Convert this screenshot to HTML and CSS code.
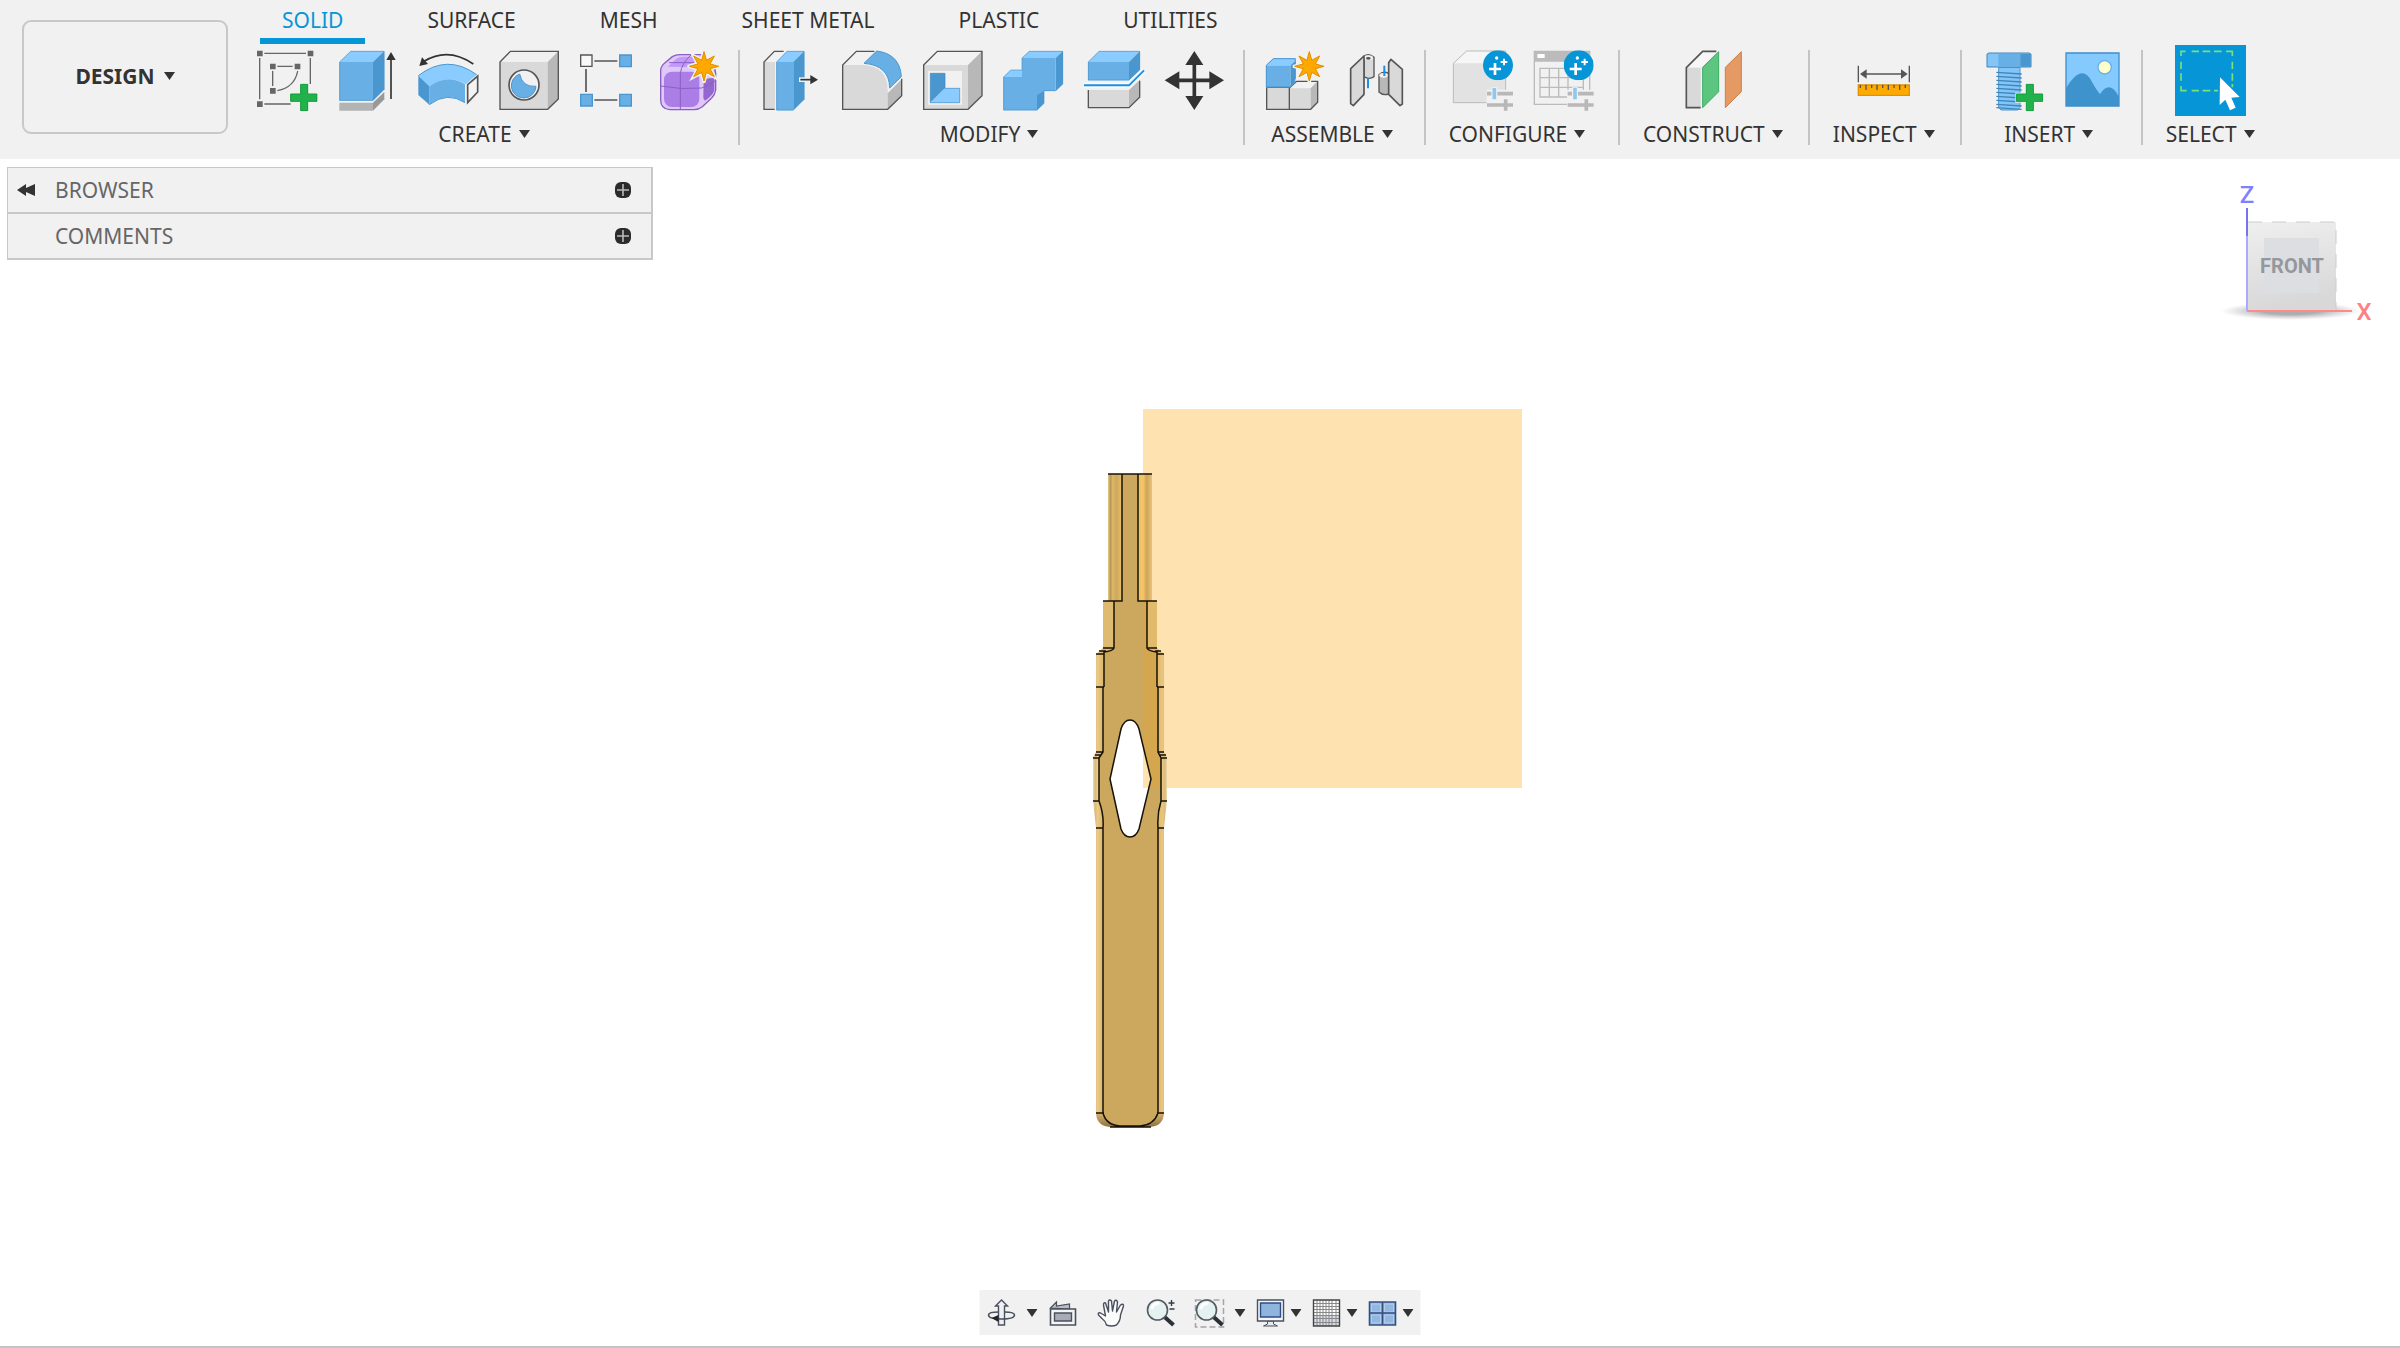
FILE: index.html
```
<!DOCTYPE html>
<html lang="en">
<head>
    <meta charset="UTF-8">
    <meta name="viewport" content="width=device-width, initial-scale=1.0">
    <title>Design Workspace</title>
    <link rel="stylesheet" href="styles.css">
</head>
<body>
    <!-- Shared icon parts -->
    <svg class="defs" aria-hidden="true">
        <symbol id="caret" viewBox="0 0 11 8"><path d="M0 0H11L5.5 8Z" fill="#333"/></symbol>
        <symbol id="star" viewBox="-50 -50 100 100">
            <path d="M0-46 8-19 32-32 19-8 46 0 19 8 32 32 8 19 0 46-8 19-32 32-19 8-46 0-19-8-32-32-8-19Z" fill="#ffa800" stroke="#f1f1f1" stroke-width="10" paint-order="stroke"/>
            <path d="M0-44 7-18 31-31 18-7 44 0 18 7 31 31 7 18 0 44-7 18-31 31-18 7-44 0-18-7-31-31-7-18Z" fill="none" stroke="#e09200" stroke-width="3"/>
        </symbol>
        <symbol id="plus" viewBox="0 0 84 84">
            <path d="M33 3H54V32H82V54H54V82H33V54H3V32H33Z" fill="#22b24c" stroke="#f1f1f1" stroke-width="8" paint-order="stroke"/>
            <path d="M33 3H54V32H82V54H54V82H33V54H3V32H33Z" fill="none" stroke="#129a3a" stroke-width="3"/>
        </symbol>
        <symbol id="sliders" viewBox="0 0 90 76">
            <path d="M0 9H82V70H0Z" fill="#f1f1f1"/>
            <path d="M2 21H80M2 55H80" stroke="#b8b8b8" stroke-width="11"/>
            <path d="M24 2V40" stroke="#f1f1f1" stroke-width="18"/>
            <path d="M24 4V38" stroke="#8fc8ef" stroke-width="11"/>
            <path d="M58 38V72" stroke="#b8b8b8" stroke-width="11"/>
        </symbol>
        <symbol id="sparkle" viewBox="0 0 90 90">
            <circle cx="45" cy="45" r="45" fill="#0696d7"/>
            <path d="M36 38V74M18 56H54" stroke="#fff" stroke-width="8"/>
            <path d="M63 25V45M53 35H73" stroke="#fff" stroke-width="6"/>
            <circle cx="41" cy="23" r="5" fill="#fff"/>
        </symbol>
    </svg>

    <header class="toolbar">
        <button class="workspace" type="button">DESIGN <svg class="caret"><use href="#caret"/></svg></button>

        <div class="toolbar-main">
            <nav class="tabs">
                <a class="tab active" href="#">SOLID</a>
                <a class="tab" href="#">SURFACE</a>
                <a class="tab" href="#">MESH</a>
                <a class="tab" href="#">SHEET METAL</a>
                <a class="tab" href="#">PLASTIC</a>
                <a class="tab" href="#">UTILITIES</a>
            </nav>

            <div class="ribbon">
                <!-- Create -->
                <section class="group group-first">
                    <div class="tools">
                        <button class="tool" type="button" aria-label="Create Sketch">
                            <svg viewBox="0 0 183 183">
                                <path d="M25 10H150M11 24V148M163 24V102M25 162H104M64 49H110M50 63V108M125 63Q116 112 64 122" fill="none" stroke="#666" stroke-width="4"/>
                                <path d="M3 2h17v17H3ZM155 2h17v17h-17ZM3 154h17v17H3ZM42 41h17v17H42ZM116 41h17v17h-17ZM42 114h17v17H42Z" fill="#666"/>
                                <use href="#plus" x="101" y="100" width="84" height="84"/>
                            </svg>
                        </button>
                        <button class="tool" type="button" aria-label="Extrude">
                            <svg viewBox="0 0 183 183">
                                <path d="M7 158H108V182H7Z" fill="#b3b3b3"/>
                                <path d="M108 158 142 126V148L108 182Z" fill="#999"/>
                                <path d="M7 36H108V152H7Z" fill="#68afe5"/>
                                <path d="M7 36 41 3H142L108 36Z" fill="#8accff"/>
                                <path d="M108 36 142 3V118L108 152Z" fill="#4a96cf"/>
                                <path d="M8 36 41 4H141V118L108 151H8Z" fill="none" stroke="#4a96cf" stroke-width="2"/>
                                <path d="M162 22V147" stroke="#333" stroke-width="5"/>
                                <path d="M148 30 162 6 176 30Z" fill="#333"/>
                            </svg>
                        </button>
                        <button class="tool" type="button" aria-label="Revolve">
                            <svg viewBox="0 0 183 183">
                                <path d="M18 34Q90-10 166 42" fill="none" stroke="#333" stroke-width="5"/>
                                <path d="M4 48 12 22 30 42Z" fill="#333"/>
                                <path d="M1 77Q88 10 176 74L143 103Q88 70 34 109Z" fill="#8accff"/>
                                <path d="M34 109Q88 70 141 103V158Q88 123 34 164Z" fill="#68afe5"/>
                                <path d="M1 77 34 109V164L1 135Z" fill="#4a96cf"/>
                                <path d="M1 77Q88 10 176 74M34 164Q88 123 141 158" fill="none" stroke="#4a96cf" stroke-width="3"/>
                                <path d="M149 104 179 78V126L149 158Z" fill="#f4f4f4" stroke="#555" stroke-width="5"/>
                            </svg>
                        </button>
                        <button class="tool" type="button" aria-label="Hole">
                            <svg viewBox="0 0 183 183">
                                <path d="M2 36 34 4H178L146 36Z" fill="#f0f0f0"/>
                                <path d="M2 36H146V179H2Z" fill="#d9d9d9"/>
                                <path d="M146 36 178 4V147L146 179Z" fill="#b8b8b8"/>
                                <path d="M3 36 34 4H178V147L146 178H3Z" fill="none" stroke="#555" stroke-width="4"/>
                                <circle cx="75" cy="105" r="45" fill="#f1f1f1" stroke="#555" stroke-width="5"/>
                                <path d="M62 72Q70 112 111 109A37 37 0 1 1 62 72Z" fill="#68afe5" stroke="#4a96cf" stroke-width="3"/>
                            </svg>
                        </button>
                        <button class="tool" type="button" aria-label="Rectangular Pattern">
                            <svg viewBox="0 0 183 183">
                                <path d="M43 33H112M18 57V126M43 150H112" stroke="#555" stroke-width="5"/>
                                <path d="M2 15h34v34H2Z" fill="#f8f8f8" stroke="#555" stroke-width="4"/>
                                <path d="M119 15h35v35h-35ZM2 133h35v35H2ZM119 133h35v35h-35Z" fill="#68afe5" stroke="#4a96cf" stroke-width="4"/>
                            </svg>
                        </button>
                        <button class="tool" type="button" aria-label="Create Form">
                            <svg viewBox="0 0 183 183">
                                <path d="M-1 60Q0 48 12 38L34 20Q44 14 56 14H120Q160 30 164 70V120Q162 134 152 144L124 170Q112 179 100 179H26Q-1 177-1 150Z" fill="#dfc8f8" stroke="#8a5fc0" stroke-width="4"/>
                                <path d="M20 50 46 26Q54 20 66 20H112L90 52Z" fill="#c299fb"/>
                                <path d="M128 92Q130 84 160 84V120Q156 136 132 152Q127 150 127 140Z" fill="#9466cf"/>
                                <rect x="9" y="65" width="106" height="106" rx="24" fill="#aa7ee6"/>
                                <path d="M0 108Q60 120 122 114Q140 108 163 92M58 179V70Q62 40 90 15M24 38H100" fill="none" stroke="#8a5fc0" stroke-width="3"/>
                                <use href="#star" x="79" y="-1" width="100" height="100"/>
                            </svg>
                        </button>
                    </div>
                    <button class="group-label" type="button">CREATE <svg class="caret"><use href="#caret"/></svg></button>
                </section>

                <!-- Modify -->
                <section class="group">
                    <div class="tools">
                        <button class="tool" type="button" aria-label="Press Pull">
                            <svg viewBox="0 0 183 183">
                                <path d="M8 36H42V179H8Z" fill="#d9d9d9"/>
                                <path d="M68 4H40L9 36V178H41" fill="none" stroke="#555" stroke-width="4"/>
                                <path d="M46 36H97V181H46Z" fill="#68afe5"/>
                                <path d="M46 36 78 3H130L97 36Z" fill="#8accff"/>
                                <path d="M97 36 130 3V148L97 181Z" fill="#4a96cf"/>
                                <path d="M47 36 78 4H129V148L97 180H47Z" fill="none" stroke="#4a96cf" stroke-width="2"/>
                                <path d="M114 89H150" stroke="#f1f1f1" stroke-width="14"/>
                                <path d="M118 89H150" stroke="#333" stroke-width="5"/>
                                <path d="M148 75 171 89 148 103Z" fill="#333"/>
                            </svg>
                        </button>
                        <button class="tool" type="button" aria-label="Fillet">
                            <svg viewBox="0 0 183 183">
                                <path d="M2 45H62Q137 48 137 120V179H2Z" fill="#d9d9d9"/>
                                <path d="M137 130 179 88V137L137 179Z" fill="#b8b8b8"/>
                                <path d="M97 4H43L2 45V178H137L179 137V86" fill="none" stroke="#555" stroke-width="4"/>
                                <path d="M66 40 104 3Q174 12 178 80L143 114Q142 46 66 40Z" fill="#68afe5" stroke="#4a96cf" stroke-width="3"/>
                            </svg>
                        </button>
                        <button class="tool" type="button" aria-label="Shell">
                            <svg viewBox="0 0 183 183">
                                <path d="M2 45 43 4H177L135 45Z" fill="#f2f2f2"/>
                                <path d="M2 45H135V179H2Z" fill="#d9d9d9"/>
                                <path d="M135 45 177 4V137L135 179Z" fill="#b8b8b8"/>
                                <path d="M2 45 43 4H177V137L135 178H2Z" fill="none" stroke="#555" stroke-width="4"/>
                                <path d="M15 63H117V164H15Z" fill="#f1f1f1"/>
                                <path d="M22 70H66V115L22 158Z" fill="#4a96cf"/>
                                <path d="M22 158 66 115H110V158Z" fill="#8accff"/>
                                <path d="M22 158V70H66V115H110V158Z" fill="none" stroke="#3f86bd" stroke-width="2"/>
                            </svg>
                        </button>
                        <button class="tool" type="button" aria-label="Combine">
                            <svg viewBox="0 0 183 183">
                                <path d="M-2 81 20 60H60V81ZM54 24 76 3H177L155 24Z" fill="#8accff"/>
                                <path d="M155 24 177 3V102L155 123ZM99 123H120V160L99 181Z" fill="#4a96cf"/>
                                <path d="M-2 81H54V24H155V123H120L99 136V181H-2Z" fill="#68afe5"/>
                                <path d="M-1 81 20 60H54V24L76 4H176V102L155 122H120V160L99 180H-1Z" fill="none" stroke="#4a96cf" stroke-width="2"/>
                            </svg>
                        </button>
                        <button class="tool" type="button" aria-label="Split Body">
                            <svg viewBox="0 0 183 183">
                                <path d="M10 120H132V173H10Z" fill="#d9d9d9"/>
                                <path d="M132 120 164 90V142L132 173Z" fill="#b8b8b8"/>
                                <path d="M10 120V173H132L164 142V92" fill="none" stroke="#555" stroke-width="4"/>
                                <path d="M9 36H132V91H9Z" fill="#68afe5"/>
                                <path d="M9 36 42 3H165L132 36Z" fill="#8accff"/>
                                <path d="M132 36 165 3V60L132 91Z" fill="#4a96cf"/>
                                <path d="M10 36 42 4H164V60L132 90H10Z" fill="none" stroke="#4a96cf" stroke-width="2"/>
                                <path d="M-3 106H132L177 61" fill="none" stroke="#f8f8f8" stroke-width="18"/>
                                <path d="M-3 106H132L177 61" fill="none" stroke="#1a90e8" stroke-width="6"/>
                            </svg>
                        </button>
                        <button class="tool" type="button" aria-label="Move/Copy">
                            <svg viewBox="0 0 183 183">
                                <path d="M85 30V150M24 91H146" stroke="#333" stroke-width="11"/>
                                <path d="M85 3 112 45H58ZM85 180 58 138H112ZM-4 91 40 64V118ZM174 91 130 118V64Z" fill="#333"/>
                            </svg>
                        </button>
                    </div>
                    <button class="group-label" type="button">MODIFY <svg class="caret"><use href="#caret"/></svg></button>
                </section>

                <!-- Assemble -->
                <section class="group">
                    <div class="tools">
                        <button class="tool" type="button" aria-label="New Component">
                            <svg viewBox="0 0 183 183">
                                <path d="M2 112H134V179H2Z" fill="#d9d9d9"/>
                                <path d="M70 115 92 93H155L134 115Z" fill="#f2f2f2"/>
                                <path d="M134 115 155 93V157L134 179Z" fill="#b8b8b8"/>
                                <path d="M2 112V178H134L155 157V94H92L70 114V178M2 112H72" fill="none" stroke="#555" stroke-width="4"/>
                                <path d="M0 46H74V112H0Z" fill="#68afe5"/>
                                <path d="M0 46 22 25H88V32L74 46Z" fill="#8accff"/>
                                <path d="M74 46 88 32V96L74 112Z" fill="#4a96cf"/>
                                <path d="M1 46 22 26H88V97L74 111H1Z" fill="none" stroke="#4a96cf" stroke-width="3"/>
                                <use href="#star" x="80" y="-1" width="100" height="100"/>
                            </svg>
                        </button>
                        <button class="tool" type="button" aria-label="Joint">
                            <svg viewBox="0 0 183 183">
                                <path d="M51 24V80Q66 90 81 80V22Q66 8 51 18" fill="#d9d9d9" stroke="#555" stroke-width="4"/>
                                <ellipse cx="64" cy="23" rx="14" ry="7" fill="#f1f1f1"/>
                                <ellipse cx="64" cy="25" rx="7" ry="4" fill="#555"/>
                                <path d="M11 56 51 18V133L19 167 11 161Z" fill="#d9d9d9" stroke="#555" stroke-width="5" stroke-linejoin="round"/>
                                <path d="M63 85V115" stroke="#1a90e8" stroke-width="6"/>
                                <path d="M96 74V126Q108 138 125 132V70Q108 62 96 74Z" fill="#b8b8b8" stroke="#555" stroke-width="4"/>
                                <ellipse cx="110" cy="76" rx="13" ry="7" fill="#f1f1f1"/>
                                <path d="M112 47V78" stroke="#1a90e8" stroke-width="6"/>
                                <path d="M125 38 132 28 166 58V162L159 167 125 133Z" fill="#d9d9d9" stroke="#555" stroke-width="5" stroke-linejoin="round"/>
                            </svg>
                        </button>
                    </div>
                    <button class="group-label" type="button">ASSEMBLE <svg class="caret"><use href="#caret"/></svg></button>
                </section>

                <!-- Configure -->
                <section class="group group-wide">
                    <div class="tools">
                        <button class="tool" type="button" aria-label="Configure Design">
                            <svg viewBox="0 0 183 183">
                                <path d="M7 40 47 3H164V130L140 158H7Z" fill="#e2e2e2"/>
                                <path d="M7 40 47 3H164L130 40Z" fill="#f6f6f6"/>
                                <path d="M110 158H7V40L47 3H164V120" fill="none" stroke="#bbb" stroke-width="3"/>
                                <use href="#sliders" x="106" y="110" width="90" height="76"/>
                                <use href="#sparkle" x="96" y="1" width="90" height="90"/>
                            </svg>
                        </button>
                        <button class="tool" type="button" aria-label="Configuration Table">
                            <svg viewBox="0 0 183 183">
                                <path d="M7 4H173V163H7Z" fill="#f1f1f1" stroke="#bbb" stroke-width="4"/>
                                <path d="M7 3H173V35H7Z" fill="#bbb"/>
                                <path d="M16 12h22v12H16Z" fill="#fff"/>
                                <path d="M24 55H154V141H24ZM24 83H154M24 112H154M52 55V141M80 55V141M108 55V141M154 55V120" fill="none" stroke="#bbb" stroke-width="4"/>
                                <use href="#sliders" x="105" y="110" width="90" height="76"/>
                                <use href="#sparkle" x="95" y="1" width="90" height="90"/>
                            </svg>
                        </button>
                    </div>
                    <button class="group-label" type="button">CONFIGURE <svg class="caret"><use href="#caret"/></svg></button>
                </section>

                <!-- Construct -->
                <section class="group group-label-sized">
                    <div class="tools">
                        <button class="tool" type="button" aria-label="Offset Plane">
                            <svg viewBox="0 0 183 183">
                                <path d="M12 53 62 4H103L56 53Z" fill="#f6f6f6"/>
                                <path d="M12 53H56V174H12Z" fill="#d9d9d9"/>
                                <path d="M103 4H62L13 53V173H56" fill="none" stroke="#555" stroke-width="5"/>
                                <path d="M62 52 110 5V125L62 173Z" fill="#5cc681" stroke="#38b064" stroke-width="3"/>
                                <path d="M130 52 178 5V125L130 173Z" fill="#e59a64" stroke="#c9804c" stroke-width="3"/>
                            </svg>
                        </button>
                    </div>
                    <button class="group-label" type="button">CONSTRUCT <svg class="caret"><use href="#caret"/></svg></button>
                </section>

                <!-- Inspect -->
                <section class="group group-label-sized">
                    <div class="tools">
                        <button class="tool" type="button" aria-label="Measure">
                            <svg viewBox="0 0 183 183">
                                <path d="M16 47V97M169 47V97M36 72H150" stroke="#555" stroke-width="4"/>
                                <path d="M21 72 41 58V86ZM164 72 144 86V58Z" fill="#555"/>
                                <path d="M16 105H169V136H16Z" fill="#ffaa00" stroke="#e09200" stroke-width="4"/>
                                <path d="M22 104v10M39 104v16M56 104v10M72 104v16M89 104v10M106 104v16M123 104v10M140 104v16M157 104v10" stroke="#555" stroke-width="4"/>
                            </svg>
                        </button>
                    </div>
                    <button class="group-label" type="button">INSPECT <svg class="caret"><use href="#caret"/></svg></button>
                </section>

                <!-- Insert -->
                <section class="group">
                    <div class="tools">
                        <button class="tool" type="button" aria-label="Insert Fastener">
                            <svg viewBox="0 0 183 183">
                                <path d="M47 52H111V172L104 180H54L47 172Z" fill="#84c5f7" stroke="#4a96cf" stroke-width="3"/>
                                <path d="M12 12 18 9H138L144 12V51H12Z" fill="#84c5f7" stroke="#3f86bd" stroke-width="3"/>
                                <path d="M46 12H112V51H46Z" fill="#68afe5"/>
                                <path d="M112 12H143V50H112Z" fill="#4a96cf"/>
                                <path d="M40 67 116 72M40 79 116 84M40 91 116 96M40 103 116 108M40 115 116 120M40 127 116 132M40 139 116 144M40 151 116 156M40 163 116 168M40 173 116 178" stroke="#3f86bd" stroke-width="4"/>
                                <use href="#plus" x="97" y="100" width="84" height="84"/>
                            </svg>
                        </button>
                        <button class="tool" type="button" aria-label="Canvas">
                            <svg viewBox="0 0 183 183">
                                <path d="M6 9H165V168H6Z" fill="#84caff"/>
                                <path d="M6 115Q54 36 84 96Q96 118 108 133Q136 88 165 140V168H6Z" fill="#3e93cd"/>
                                <circle cx="122" cy="52" r="20" fill="#ffffcc" stroke="#68afe5" stroke-width="4"/>
                                <path d="M6 9H165V168H6Z" fill="none" stroke="#3e8fcb" stroke-width="4"/>
                            </svg>
                        </button>
                    </div>
                    <button class="group-label" type="button">INSERT <svg class="caret"><use href="#caret"/></svg></button>
                </section>

                <!-- Select -->
                <section class="group group-label-sized group-last">
                    <div class="tools">
                        <button class="tool selected" type="button" aria-label="Window Selection">
                            <svg viewBox="0 0 183 183">
                                <path d="M3 18V4H17M35 4H57M68 4H91M102 4H125M138 4H157V18M157 35V57M157 70V92M3 35V57M3 70V92M3 108V122H20M35 122H57M68 122H91M102 122H114M157 102V112" fill="none" stroke="#78e07c" stroke-width="5"/>
                                <path d="M120 82 179 141 154 143 167 173 150 181 136 149 119 165Z" fill="#fff"/>
                            </svg>
                        </button>
                    </div>
                    <button class="group-label" type="button">SELECT <svg class="caret"><use href="#caret"/></svg></button>
                </section>
            </div>
        </div>
    </header>

    <main class="viewport">
        <!-- Side panels -->
        <aside class="panels">
            <div class="panel">
                <button class="collapse" type="button" aria-label="Collapse">
                    <svg width="18" height="12" viewBox="0 0 18 12"><path d="M0 6 9 0V4L18 0V12L9 8V12Z" fill="#333"/></svg>
                </button>
                <span class="panel-title">BROWSER</span>
                <button class="expand" type="button" aria-label="Browser options">
                    <svg width="16" height="16" viewBox="0 0 16 16"><rect width="16" height="16" rx="6" fill="#2b2b2b"/><path d="M8 2V14M2 8H14" stroke="#bbb" stroke-width="1.6"/></svg>
                </button>
            </div>
            <div class="panel">
                <span class="panel-title">COMMENTS</span>
                <button class="expand" type="button" aria-label="Add comment">
                    <svg width="16" height="16" viewBox="0 0 16 16"><rect width="16" height="16" rx="6" fill="#2b2b2b"/><path d="M8 2V14M2 8H14" stroke="#bbb" stroke-width="1.6"/></svg>
                </button>
            </div>
        </aside>

        <!-- Model and construction plane -->
        <svg class="scene" width="440" height="730" viewBox="0 0 440 730" role="img" aria-label="Model, front view">
            <defs>
                <linearGradient id="shaft" x1="0" x2="1" y1="0" y2="0">
                    <stop offset="0" stop-color="#e6c98b"/>
                    <stop offset="0.06" stop-color="#b8964f"/>
                    <stop offset="0.1" stop-color="#dcb768"/>
                    <stop offset="0.2" stop-color="#cda75b"/>
                    <stop offset="0.3" stop-color="#e5bd69"/>
                    <stop offset="0.68" stop-color="#efc068"/>
                    <stop offset="0.8" stop-color="#f6c566"/>
                    <stop offset="0.88" stop-color="#cda458"/>
                    <stop offset="1" stop-color="#eac27a"/>
                </linearGradient>
                <linearGradient id="side" x1="0" x2="1" y1="0" y2="0">
                    <stop offset="0" stop-color="#ecd8ac"/>
                    <stop offset="0.03" stop-color="#d8bb7c"/>
                    <stop offset="0.06" stop-color="#ecca85"/>
                    <stop offset="0.12" stop-color="#deba72"/>
                    <stop offset="0.88" stop-color="#e2ba6c"/>
                    <stop offset="0.94" stop-color="#e8c680"/>
                    <stop offset="0.97" stop-color="#d8bb7c"/>
                    <stop offset="1" stop-color="#ecd8ac"/>
                </linearGradient>
                <linearGradient id="foot" x1="0" x2="0" y1="0" y2="1">
                    <stop offset="0" stop-color="#dcb873"/>
                    <stop offset="1" stop-color="#8f733e"/>
                </linearGradient>
            </defs>
            <path d="M53 0H432V379H53Z" fill="#fee2b0"/>
            <path d="M18 65H62V192H18Z" fill="url(#shaft)"/>
            <path d="M13 192H67V239L74 245V343L77 348V392L74 419V703H6V419L3 392V348L6 343V245L13 239Z M20 370 31 420Q34 428 40 428 46 428 49 420L61 370 49 320Q46 311 40 311 34 311 31 320Z" fill="url(#side)" fill-rule="evenodd"/>
            <path d="M6 703H74Q74 718 58 718H22Q6 718 6 703Z" fill="url(#foot)"/>
            <path d="M32 65H48V192H57V239Q58 243 67 243V278L68 343 71 349V392Q67 405 68 419V704Q64 717 50 717H30Q16 717 13 704V419Q14 405 9 392V349L13 343 14 243Q23 243 24 239V192H32Z M20 370 31 420Q34 428 40 428 46 428 49 420L61 370 49 320Q46 311 40 311 34 311 31 320Z" fill="#cca85e" fill-rule="evenodd"/>
            <path d="M53 192H57V239L67 243V278L68 343 71 349V379H59L61 370 53 336Z" fill="#ff9d00" opacity="0.16"/>
            <path d="M18 65H62M32 65V192H13M48 65V192H67M24 192V239Q23 242 14 243V278M57 192V239Q58 242 67 243V278M13 239H24M57 239H67M9 242H16M65 242H71M6 245H14M67 245H74M6 278H14M67 278H74M13 278V343L9 349V392Q14 405 13 419V704Q16 716 30 717H50Q64 716 68 704V419Q67 405 71 392V349L68 343V278M6 343H13M68 343H74M5 346H11M70 346H76M3 349H9M71 349H77M3 392H9M71 392H77M6 419H13M68 419H74M6 704H14M67 704H74M20 718H61" fill="none" stroke="#16120a" stroke-width="1.5"/>
            <path d="M20 370 31 420Q34 428 40 428 46 428 49 420L61 370 49 320Q46 311 40 311 34 311 31 320Z" fill="none" stroke="#16120a" stroke-width="1.5"/>
        </svg>

        <!-- View cube -->
        <svg class="viewcube" width="160" height="150" viewBox="0 0 160 150" role="img" aria-label="View cube">
            <defs>
                <linearGradient id="cubeFace" x1="0" x2="0.2" y1="0" y2="1">
                    <stop offset="0" stop-color="#efefef"/>
                    <stop offset="1" stop-color="#d8d8d8"/>
                </linearGradient>
                <radialGradient id="cubeShadow">
                    <stop offset="0.4" stop-color="#777" stop-opacity="0.6"/>
                    <stop offset="1" stop-color="#999" stop-opacity="0"/>
                </radialGradient>
            </defs>
            <ellipse cx="71" cy="131" rx="70" ry="9" fill="url(#cubeShadow)"/>
            <path d="M28 42H116V130H28Z" fill="url(#cubeFace)"/>
            <path d="M28 42H116V130" fill="none" stroke="#ccc" stroke-dasharray="14 10"/>
            <path d="M44 58H99V113H44Z" fill="#dcdee1"/>
            <path d="M27 28V131" stroke="#a9a9ff" stroke-width="2"/>
            <path d="M27 28V56" stroke="#7474ee" stroke-width="2"/>
            <path d="M27 131H132" stroke="#ff8a8a" stroke-width="2"/>
            <text class="axis" x="27" y="23" fill="#8080ff">Z</text>
            <text class="axis" x="144" y="140" fill="#ff8080">X</text>
            <text class="face" x="72" y="93" fill="#94989d">FRONT</text>
        </svg>

        <!-- Navigation bar -->
        <nav class="navbar">
            <button class="nav-button" type="button" aria-label="Orbit">
                <svg width="30" height="30" viewBox="0 0 30 30">
                    <path d="M12 27V8H9L15 2 21 8H18V27Z" fill="#eef0f4" stroke="#4a505c" stroke-width="1.4"/>
                    <path d="M12 14Q2 14 2 17 2 21 15 21 28 21 28 17 28 14 18 14" fill="none" stroke="#4a505c" stroke-width="1.6"/>
                    <path d="M5 20 12 17V24Z" fill="#222"/>
                </svg>
            </button>
            <button class="nav-caret" type="button" aria-label="Orbit options"><svg class="caret"><use href="#caret"/></svg></button>
            <button class="nav-button spaced" type="button" aria-label="Look At">
                <svg width="30" height="30" viewBox="0 0 30 30">
                    <path d="M3 10 9 4V8L22 6V11Z" fill="#b9bdc6" stroke="#4a505c" stroke-width="1.2"/>
                    <path d="M3 11H28V27H3Z" fill="#f4f5f7" stroke="#4a505c" stroke-width="1.6"/>
                    <path d="M7 15H24V23H7Z" fill="#a7acb5" stroke="#4a505c" stroke-width="1.4"/>
                </svg>
            </button>
            <button class="nav-button spaced" type="button" aria-label="Pan">
                <svg width="30" height="30" viewBox="0 0 30 30">
                    <path d="M10 27Q9 23 6 21L2 17Q1 14 4 15L9 18 7 7Q7 4 9 5L12 14V3Q13 1 15 3L16 13 18 3Q20 1 21 4L20 14 24 7Q27 5 27 8L24 17Q24 23 20 27Q15 29 10 27Z" fill="#fbfbfb" stroke="#4a505c" stroke-width="1.4" stroke-linejoin="round"/>
                </svg>
            </button>
            <button class="nav-button spaced" type="button" aria-label="Zoom">
                <svg width="30" height="30" viewBox="0 0 30 30">
                    <path d="M18 18 28 27" stroke="#2c303a" stroke-width="4"/>
                    <circle cx="12" cy="12" r="10" fill="#e4f1f1" stroke="#555b62" stroke-width="1.6"/>
                    <path d="M6 11Q8 5 14 5" fill="none" stroke="#fff" stroke-width="3"/>
                    <path d="M26 2V8M23 5H29M24 11H29" stroke="#333a4a" stroke-width="1.4"/>
                </svg>
            </button>
            <button class="nav-button" type="button" aria-label="Zoom Window">
                <svg width="30" height="30" viewBox="0 0 30 30">
                    <path d="M1 2H29V29H1Z" fill="none" stroke="#a5a5a5" stroke-width="1.5" stroke-dasharray="6 3"/>
                    <path d="M18 18 28 27" stroke="#2c2f33" stroke-width="4"/>
                    <circle cx="12" cy="12" r="10" fill="#e4f1f1" stroke="#555b62" stroke-width="1.6"/>
                    <path d="M6 11Q8 5 14 5" fill="none" stroke="#fff" stroke-width="3"/>
                </svg>
            </button>
            <button class="nav-caret" type="button" aria-label="Zoom options"><svg class="caret"><use href="#caret"/></svg></button>
            <button class="nav-button paired" type="button" aria-label="Display Settings">
                <svg width="30" height="30" viewBox="0 0 30 30">
                    <path d="M12 23H18V26L22 28H8L12 26Z" fill="#e8eaee" stroke="#4a505c"/>
                    <path d="M2 2H28V23H2Z" fill="#f7f7f9" stroke="#4a505c" stroke-width="1.4"/>
                    <path d="M5 5H25V19H5Z" fill="#8fb4de" stroke="#2f4e85" stroke-width="1.4"/>
                </svg>
            </button>
            <button class="nav-caret" type="button" aria-label="Display options"><svg class="caret"><use href="#caret"/></svg></button>
            <button class="nav-button paired" type="button" aria-label="Grid and Snaps">
                <svg width="30" height="30" viewBox="0 0 30 30">
                    <path d="M2 2H28V28H2Z" fill="#fff"/>
                    <path d="M2 18H28V28H2Z" fill="#d8dbea"/>
                    <path d="M5.5 2V28M8.5 2V28M11.5 2V28M14.5 2V28M17.5 2V28M20.5 2V28M24.5 2V28M2 5.5H28M2 8.5H28M2 11.5H28M2 14.5H28M2 17.5H28M2 20.5H28M2 24.5H28" stroke="#888" stroke-width="1"/>
                    <path d="M2 2H28V28H2Z" fill="none" stroke="#444" stroke-width="1.4"/>
                </svg>
            </button>
            <button class="nav-caret" type="button" aria-label="Grid options"><svg class="caret"><use href="#caret"/></svg></button>
            <button class="nav-button paired" type="button" aria-label="Viewports">
                <svg width="30" height="30" viewBox="0 0 30 30">
                    <path d="M2 4H28V27H2Z" fill="#8fb4de"/>
                    <path d="M4 6H13V14H4ZM17 6H26V14H17ZM4 17H13V25H4ZM17 17H26V25H17Z" fill="#92b8e2" stroke="#b4cdea"/>
                    <path d="M2 4H28V27H2ZM15 4V27M2 15H28" fill="none" stroke="#34507f" stroke-width="1.6"/>
                </svg>
            </button>
            <button class="nav-caret" type="button" aria-label="Viewport options"><svg class="caret"><use href="#caret"/></svg></button>
        </nav>
    </main>
</body>
</html>
```
FILE: styles.css
```
/* General Reset */
* {
    margin: 0;
    padding: 0;
    box-sizing: border-box;
}

body {
    font-family: 'Noto Sans', 'Open Sans', sans-serif;
    font-size: 21px;
    line-height: 28px;
    color: #333;
    background: #fff;
    display: flex;
    flex-direction: column;
    min-height: 100vh;
}

button {
    font: inherit;
    color: inherit;
    background: none;
    border: none;
    cursor: pointer;
}

a {
    color: inherit;
    text-decoration: none;
}

svg {
    display: block;
    overflow: visible;
}

.defs {
    position: absolute;
    width: 0;
    height: 0;
}

.caret {
    width: 11px;
    height: 8px;
}

/* Toolbar */
.toolbar {
    display: flex;
    gap: 23px;
    padding: 0 22px 11px;
    background: #f1f1f1;
}

.workspace {
    display: flex;
    align-items: center;
    justify-content: center;
    gap: 9px;
    width: 206px;
    height: 114px;
    margin-top: 20px;
    padding-bottom: 2px;
    border: 2px solid #c8c8c8;
    border-radius: 9px;
    font-weight: bold;
}

.tabs {
    display: flex;
    gap: 40px;
    padding-left: 9px;
}

.tab {
    padding: 6px 22px 4px;
    border-bottom: 6px solid transparent;
}

.tab.active {
    color: #0696d7;
    border-color: #0696d7;
}

/* Ribbon */
.ribbon {
    display: flex;
    margin-top: 1px;
}

.group {
    position: relative;
    display: flex;
    flex-direction: column;
    align-items: center;
    padding: 0 11px 0 18px;
}

.group::after {
    content: '';
    position: absolute;
    top: 5px;
    right: -2px;
    bottom: 3px;
    width: 2px;
    background: #c4c4c4;
}

.group-first {
    padding-left: 0;
}

.group-last::after {
    display: none;
}

.group-wide {
    padding: 0 20px 0 22px;
}

.group-label-sized {
    padding: 0 25px;
}

.tools {
    display: flex;
    gap: 10px;
}

.tool {
    width: 71px;
    height: 71px;
    padding: 5px;
}

.tool.selected {
    background: #0696d7;
}

.group-label {
    display: flex;
    align-items: center;
    gap: 7px;
    padding: 4px 10px 0 0;
}

.group-label-sized .group-label {
    padding-right: 0;
}

/* Viewport */
.viewport {
    position: relative;
    flex: 1;
    border-bottom: 2px solid #c4c4c4;
}

.panels {
    width: 27%;
    max-width: 646px;
    margin: 8px 0 0 7px;
    border: 2px solid #c8c8c8;
    border-top-width: 1px;
    border-left-width: 1px;
    background: #f1f1f1;
    color: #666;
}

.panel {
    display: flex;
    align-items: center;
    height: 44px;
    padding: 0 20px 0 47px;
}

.panel + .panel {
    height: 46px;
    border-top: 2px solid #c8c8c8;
}

.panel-title {
    flex: 1;
}

.collapse {
    margin: 0 20px 0 -38px;
}

.scene {
    position: absolute;
    left: calc(50% - 110px);
    top: calc(50% - 344px);
}

.viewcube {
    position: absolute;
    top: 21px;
    right: 20px;
}

.axis,
.face {
    font-family: Roboto, sans-serif;
    text-anchor: middle;
}

.axis {
    font-size: 24px;
    font-weight: 500;
}

.face {
    font-size: 20px;
    font-weight: bold;
}

/* Navigation bar */
.navbar {
    position: absolute;
    left: 50%;
    bottom: 11px;
    transform: translateX(-50%);
    display: flex;
    align-items: center;
    gap: 10px;
    height: 45px;
    padding: 0 7px;
    background: #f1f1f1;
}

.nav-button.spaced {
    margin-right: 9px;
}

.nav-button.paired {
    margin-right: -5px;
}
```
